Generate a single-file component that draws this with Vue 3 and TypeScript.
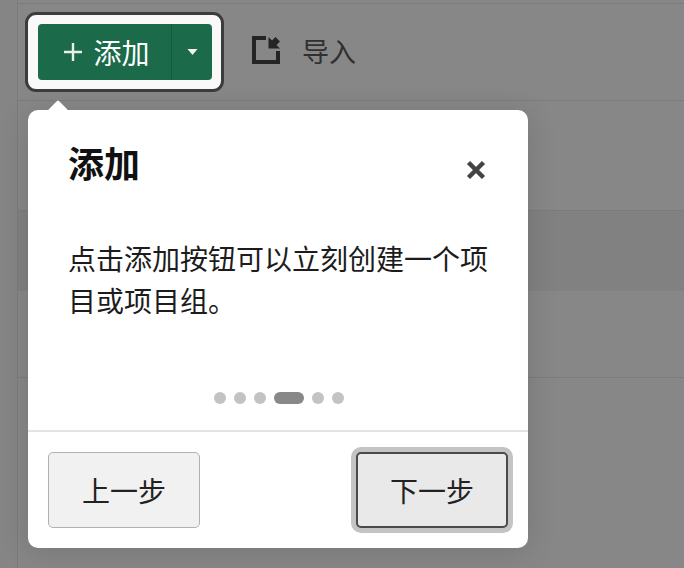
<script setup lang="ts">
const dots = [false, false, false, true, false, false]
const rows = ['row-a', 'row-b', 'row-c', 'row-d']
</script>

<template>
  <div class="page">
    <div class="rail"></div>
    <div class="main">
      <div class="toolbar">
        <div class="focus-ring">
          <div class="split">
            <button class="add"><span class="plus"><svg width="20" height="20" viewBox="0 0 20 20"><path d="M10 1v18M1 10h18" stroke="#e8f0ec" stroke-width="2.4" /></svg></span><span>添加</span></button>
            <button class="caret" aria-label="更多"><svg width="11" height="6" viewBox="0 0 11 6"><path d="M.5 0h10L5.500 6z" fill="#f2f2f2" /></svg></button>
          </div>
        </div>
        <button class="import">
          <svg width="28" height="28" viewBox="0 0 28 28" fill="none">
            <path d="M14 2H2v24h24V15" stroke="#252525" stroke-width="4" />
            <path d="M16.500 1v11.500H28L24.500 9 28 5.500 23.500 1 20 4.500 16.500 1z" fill="#252525" />
          </svg>
          <span>导入</span>
        </button>
      </div>
      <div v-for="r in rows" :key="r" :class="['row', r]"></div>
    </div>

    <section class="pop">
      <span class="arrow"></span>
      <div class="head">
        <h2>添加</h2>
        <svg class="close" width="20" height="20" viewBox="0 0 20 20"><path d="M2.500 2.500l15 15M17.500 2.500l-15 15" stroke="#444" stroke-width="4.500" /></svg>
      </div>
      <p class="body">点击添加按钮可以立刻创建一个项目或项目组。</p>
      <div class="dots">
        <i v-for="(d, i) in dots" :key="i" :class="{ on: d }"></i>
      </div>
      <div class="foot">
        <button class="btn">上一步</button>
        <button class="btn primary">下一步</button>
      </div>
    </section>
  </div>
</template>

<style>
html, body { margin: 0; padding: 0; }
</style>

<style scoped>
.page {
  position: relative;
  width: 684px;
  height: 568px;
  overflow: hidden;
  display: flex;
  background: #878787;
  font-family: "Liberation Sans", "Noto Sans CJK SC", sans-serif;
}
.rail { width: 17px; flex: none; background: #858585; border-right: 1px solid #7c7c7c; }
.main { flex: 1; min-width: 0; display: flex; flex-direction: column; }
.toolbar {
  height: 98px;
  box-sizing: border-box;
  margin-top: 3px;
  border-top: 1px solid #7b7b7b;
  border-bottom: 1px solid #7b7b7b;
  display: flex;
  align-items: center;
  padding: 0 0 0 7px;
}
.focus-ring {
  box-sizing: border-box;
  width: 199px;
  height: 80px;
  padding: 9px 9px 9px 10px;
  background: #f9f9f9;
  border: 3px solid #3c3c3c;
  border-radius: 11px;
}
.split { display: flex; height: 56px; border-radius: 4px; overflow: hidden; background: #1b6a49; color: #fff; }
.split button { background: none; border: 0; padding: 0; color: inherit; font: inherit; display: flex; align-items: center; justify-content: center; }
.add { width: 134px; gap: 10px; padding-left: 4px !important; font-size: 28px !important; border-right: 1px solid #155a3d !important; }
.plus { display: flex; }
.caret { flex: 1; }
.import { display: flex; align-items: center; gap: 22px; background: none; border: 0; padding: 0; margin: -4px 0 0 28px; color: #303030; font: inherit; font-size: 27px; }
.row { border-bottom: 1px solid #7b7b7b; box-sizing: border-box; }
.row-a { height: 110px; }
.row-b { height: 80px; background: #818181; border-bottom: 0; }
.row-c { height: 87px; }
.row-d { flex: 1; border-bottom: 0; }

.pop {
  position: absolute;
  left: 28px;
  top: 110px;
  width: 500px;
  height: 438px;
  display: flex;
  flex-direction: column;
  background: #fff;
  border-radius: 10px;
  color: #111;
  box-shadow: 0 4px 30px rgba(0, 0, 0, .13);
}
.arrow { position: absolute; left: 23px; top: -7px; width: 14px; height: 14px; background: #fff; transform: rotate(45deg); border-radius: 1px; }
.head { position: relative; height: 88px; padding: 36px 0 0 40px; box-sizing: border-box; display: flex; justify-content: space-between; align-items: flex-start; }
h2 { margin: 0; font-size: 36px; line-height: 40px; font-weight: 700; color: #111; }
.close { margin: 14px 42px 0 0; }
.body { margin: 42px 0 0; padding: 0 36px 0 40px; font-size: 28px; line-height: 42px; height: 84px; color: #1c1c1c; }
.dots { margin-top: auto; height: 14px; display: flex; justify-content: center; align-items: center; gap: 8px; padding: 0 0 25px 2px; }
.dots i { width: 12px; height: 12px; border-radius: 6px; background: #c3c3c3; }
.dots i.on { width: 30px; background: #888; }
.foot { border-top: 2px solid #e3e3e3; height: 118px; box-sizing: border-box; padding: 20px 20px 0; display: flex; justify-content: space-between; }
.btn { box-sizing: border-box; width: 152px; height: 76px; border: 1.5px solid #b0b0b0; border-radius: 5px; background: #f1f1f1; font-family: inherit; font-size: 28px; color: #222; padding: 0; }
.primary { border: 2px solid #4a4a4a; background: #e9e9e9; box-shadow: 0 0 0 5px #c4c4c4; }
</style>
